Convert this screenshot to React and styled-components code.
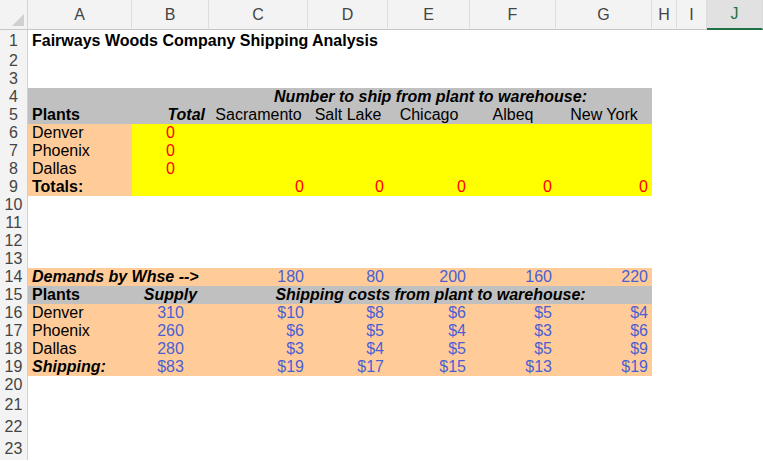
import React from 'react'
import styled, { createGlobalStyle } from 'styled-components'

const Global = createGlobalStyle`
  body { margin: 0; background: #fff; font-family: "Liberation Sans", Arial, sans-serif; }
`

const COLS = ['A', 'B', 'C', 'D', 'E', 'F', 'G', 'H', 'I', 'J']
const WIDTHS = '28px 104px 77px 99px 80px 82px 86px 96px 25px 30px 56px'

const Sheet = styled.div`
  display: grid;
  grid-template-columns: ${WIDTHS};
  grid-auto-rows: auto;
  width: 763px;
  height: 461px;
  overflow: hidden;
  align-content: start;
`

const Corner = styled.div`
  height: 30px;
  background: #f3f3f3;
  border-bottom: 1px solid #c6c6c6;
  border-right: 1px solid #d6d6d6;
  box-sizing: border-box;
  position: relative;
  &::after {
    content: '';
    position: absolute;
    right: 3px;
    bottom: 3px;
    border-left: 12px solid transparent;
    border-bottom: 12px solid #d0d0d0;
  }
`

const ColHead = styled.div`
  height: 30px;
  box-sizing: border-box;
  background: ${p => (p.$sel ? '#e1e1e1' : '#f3f3f3')};
  border-right: 1px solid #dcdcdc;
  border-bottom: ${p => (p.$sel ? '2px solid #1e7145' : '1px solid #c6c6c6')};
  color: ${p => (p.$sel ? '#1e7145' : '#444')};
  font-size: 16px;
  display: flex;
  align-items: center;
  justify-content: center;
`

const RowHead = styled.div`
  height: ${p => p.$h}px;
  box-sizing: border-box;
  background: #f3f3f3;
  border-right: 1px solid #d0d0d0;
  color: #444;
  font-size: 16px;
  display: flex;
  align-items: center;
  justify-content: center;
`

const Cell = styled.div`
  grid-column: span ${p => p.$span || 1};
  height: ${p => p.$h}px;
  background: ${p => p.$bg || '#fff'};
  color: ${p => p.$color || '#000'};
  font-size: 16px;
  font-weight: ${p => (p.$b ? 700 : 400)};
  font-style: ${p => (p.$i ? 'italic' : 'normal')};
  display: flex;
  align-items: center;
  justify-content: ${p => p.$align || 'flex-start'};
  padding: 0 4px;
  white-space: nowrap;
  box-sizing: border-box;
`

const G = '#c0c0c0', Y = '#ffff00', P = '#ffcc99', R = '#ff0000', B = '#4a5fd4'
const c = (text, o = {}) => ({ text, ...o })
const nums = (vals, bg, color) => vals.map(v => c(v, { bg, color, align: 'flex-end' }))

const rows = [
  [c('Fairways Woods Company Shipping Analysis', { b: true, span: 7 })],
  [],
  [],
  [c('', { bg: G }), c('', { bg: G }), c('Number to ship from plant to warehouse:', { bg: G, b: true, i: true, span: 5, align: 'center' })],
  [c('Plants', { bg: G, b: true }), c('Total', { bg: G, b: true, i: true, align: 'flex-end' }),
    ...['Sacramento', 'Salt Lake', 'Chicago', 'Albeq', 'New York'].map(t => c(t, { bg: G, align: 'center' }))],
  ...['Denver', 'Phoenix', 'Dallas'].map(n => [c(n, { bg: P }), c('0', { bg: Y, color: R, align: 'center' }), c('', { bg: Y, span: 5 })]),
  [c('Totals:', { bg: P, b: true }), c('', { bg: Y }), ...nums(['0', '0', '0', '0', '0'], Y, R)],
  [], [], [], [],
  [c('Demands by Whse -->', { bg: P, b: true, i: true, span: 2 }), ...nums(['180', '80', '200', '160', '220'], P, B)],
  [c('Plants', { bg: G, b: true }), c('Supply', { bg: G, b: true, i: true, align: 'center' }),
    c('Shipping costs from plant to warehouse:', { bg: G, b: true, i: true, span: 5, align: 'center' })],
  [c('Denver', { bg: P }), c('310', { bg: P, color: B, align: 'center' }), ...nums(['$10', '$8', '$6', '$5', '$4'], P, B)],
  [c('Phoenix', { bg: P }), c('260', { bg: P, color: B, align: 'center' }), ...nums(['$6', '$5', '$4', '$3', '$6'], P, B)],
  [c('Dallas', { bg: P }), c('280', { bg: P, color: B, align: 'center' }), ...nums(['$3', '$4', '$5', '$5', '$9'], P, B)],
  [c('Shipping:', { bg: P, b: true, i: true }), c('$83', { bg: P, color: B, align: 'center' }), ...nums(['$19', '$17', '$15', '$13', '$19'], P, B)],
  [], [], [], [],
]

const heightOf = i => (i === 0 ? 22 : i >= 20 ? 22 : 18)

export default function App() {
  return (
    <>
      <Global />
      <Sheet>
        <Corner />
        {COLS.map(l => <ColHead key={l} $sel={l === 'J'}>{l}</ColHead>)}
        {rows.map((cells, i) => {
          const h = heightOf(i)
          const used = cells.reduce((s, x) => s + (x.span || 1), 0)
          return (
            <React.Fragment key={i}>
              <RowHead $h={h}>{i + 1}</RowHead>
              {cells.map((x, j) => (
                <Cell key={j} $h={h} $span={x.span} $bg={x.bg} $color={x.color} $b={x.b} $i={x.i} $align={x.align}>
                  {x.text}
                </Cell>
              ))}
              <Cell $h={h} $span={10 - used} />
            </React.Fragment>
          )
        })}
      </Sheet>
    </>
  )
}
